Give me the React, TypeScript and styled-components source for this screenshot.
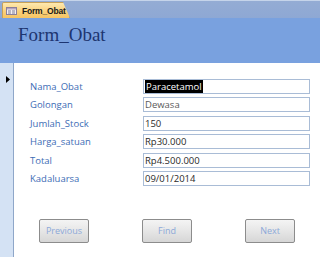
import React from "react";
import styled, { createGlobalStyle } from "styled-components";

const Global = createGlobalStyle`
  html, body { margin: 0; padding: 0; background: #ffffff; }
  body { font-family: "Open Sans", "Liberation Sans", sans-serif; }
`;

const Window = styled.div`
  width: 320px;
  height: 257px;
  display: flex;
  flex-direction: column;
  overflow: hidden;
  background: #ffffff;
`;

const TabStrip = styled.div`
  height: 18px;
  flex: none;
  display: flex;
  align-items: flex-end;
  padding-left: 2px;
  background: linear-gradient(#c5d4ea 0, #c5d4ea 1px, #94acd4 1px, #8ea8d4 100%);
  box-sizing: border-box;
`;

const Tab = styled.div`
  height: 16px;
  width: 68px;
  box-sizing: border-box;
  display: flex;
  align-items: center;
  gap: 5px;
  padding-left: 3px;
  background: linear-gradient(#fde9b0, #f9cf78 60%, #f6c463);
  border: 1px solid #c8a257;
  border-bottom: none;
  border-radius: 2px 0 0 0;
  clip-path: polygon(0 0, 61px 0, 68px 100%, 0 100%);
`;

const TabLabel = styled.span`
  font-family: "Liberation Sans", Arial, sans-serif;
  font-size: 8.5px;
  font-weight: bold;
  letter-spacing: -0.2px;
  color: #1a1a1a;
  white-space: nowrap;
`;

const Header = styled.div`
  height: 45px;
  flex: none;
  background: #79a1df;
  padding: 5px 0 0 18px;
  box-sizing: border-box;
`;

const Title = styled.h1`
  margin: 0;
  font-family: "Liberation Serif", "Times New Roman", serif;
  font-weight: normal;
  font-size: 19px;
  line-height: 24px;
  color: #1d3570;
`;

const Body = styled.div`
  flex: 1;
  display: flex;
  min-height: 0;
`;

const Selector = styled.div`
  flex: none;
  background: #d4e2f4;
  border-right: 1px solid #8fa7c9;
  padding-top: 3px;
  padding-left: 6px;
  width: 7px;
`;

const Content = styled.div`
  flex: 1;
  padding: 16px 10px 0 16px;
  display: flex;
  flex-direction: column;
`;

const Fields = styled.div`
  display: grid;
  grid-template-columns: 113px 167px;
  row-gap: 3.4px;
`;

const Label = styled.div`
  font-family: "Open Sans", sans-serif;
  font-size: 9.5px;
  color: #3d6cb5;
  height: 15px;
  line-height: 15px;
`;

const Field = styled.div<{ $muted?: boolean }>`
  height: 15px;
  box-sizing: border-box;
  border: 1px solid #a9bcd6;
  padding-left: 1px;
  font-family: "Open Sans", sans-serif;
  font-size: 9.5px;
  line-height: 13px;
  color: ${(p) => (p.$muted ? "#5a5a5a" : "#2a2a2a")};
  white-space: nowrap;
`;

const Selected = styled.span`
  background: #000000;
  color: #ffffff;
  padding: 0 1px;
`;

const ButtonRow = styled.div`
  display: flex;
  margin-top: 33px;
  padding-left: 9px;
  gap: 53px;
`;

const Button = styled.button`
  width: 50px;
  height: 24px;
  box-sizing: border-box;
  border: 1px solid #8c8c8c;
  border-radius: 2px;
  background: linear-gradient(#f4f4f4, #e6e6e6 50%, #d6d6d6);
  font-family: "Open Sans", sans-serif;
  font-size: 9px;
  color: #8ca8d8;
  padding: 0;
`;

const rows: { label: string; value: React.ReactNode; muted?: boolean }[] = [
  { label: "Nama_Obat", value: <Selected>Paracetamol</Selected> },
  { label: "Golongan", value: "Dewasa", muted: true },
  { label: "Jumlah_Stock", value: "150" },
  { label: "Harga_satuan", value: "Rp30.000" },
  { label: "Total", value: "Rp4.500.000" },
  { label: "Kadaluarsa", value: "09/01/2014" },
];

export default function App() {
  return (
    <>
      <Global />
      <Window>
        <TabStrip>
          <Tab>
            <svg width="11" height="8" viewBox="0 0 11 8">
              <rect x="0.5" y="0.5" width="10" height="7" fill="#f3eef0" stroke="#8a7f9a" />
              <rect x="1" y="1" width="9" height="1.5" fill="#b5a3bd" />
              <rect x="2" y="3.5" width="3" height="1" fill="#7f7f9a" />
              <rect x="6" y="3.5" width="3" height="1" fill="#7f7f9a" />
              <rect x="2" y="5.5" width="3" height="1" fill="#7f7f9a" />
              <rect x="6" y="5.5" width="3" height="1" fill="#7f7f9a" />
            </svg>
            <TabLabel>Form_Obat</TabLabel>
          </Tab>
        </TabStrip>
        <Header>
          <Title>Form_Obat</Title>
        </Header>
        <Body>
          <Selector>
            <svg width="4" height="7" viewBox="0 0 4 7">
              <polygon points="0,0 4,3.5 0,7" fill="#000" />
            </svg>
          </Selector>
          <Content>
            <Fields>
              {rows.map((r) => (
                <React.Fragment key={r.label}>
                  <Label>{r.label}</Label>
                  <Field $muted={r.muted}>{r.value}</Field>
                </React.Fragment>
              ))}
            </Fields>
            <ButtonRow>
              <Button>Previous</Button>
              <Button>Find</Button>
              <Button>Next</Button>
            </ButtonRow>
          </Content>
        </Body>
      </Window>
    </>
  );
}
